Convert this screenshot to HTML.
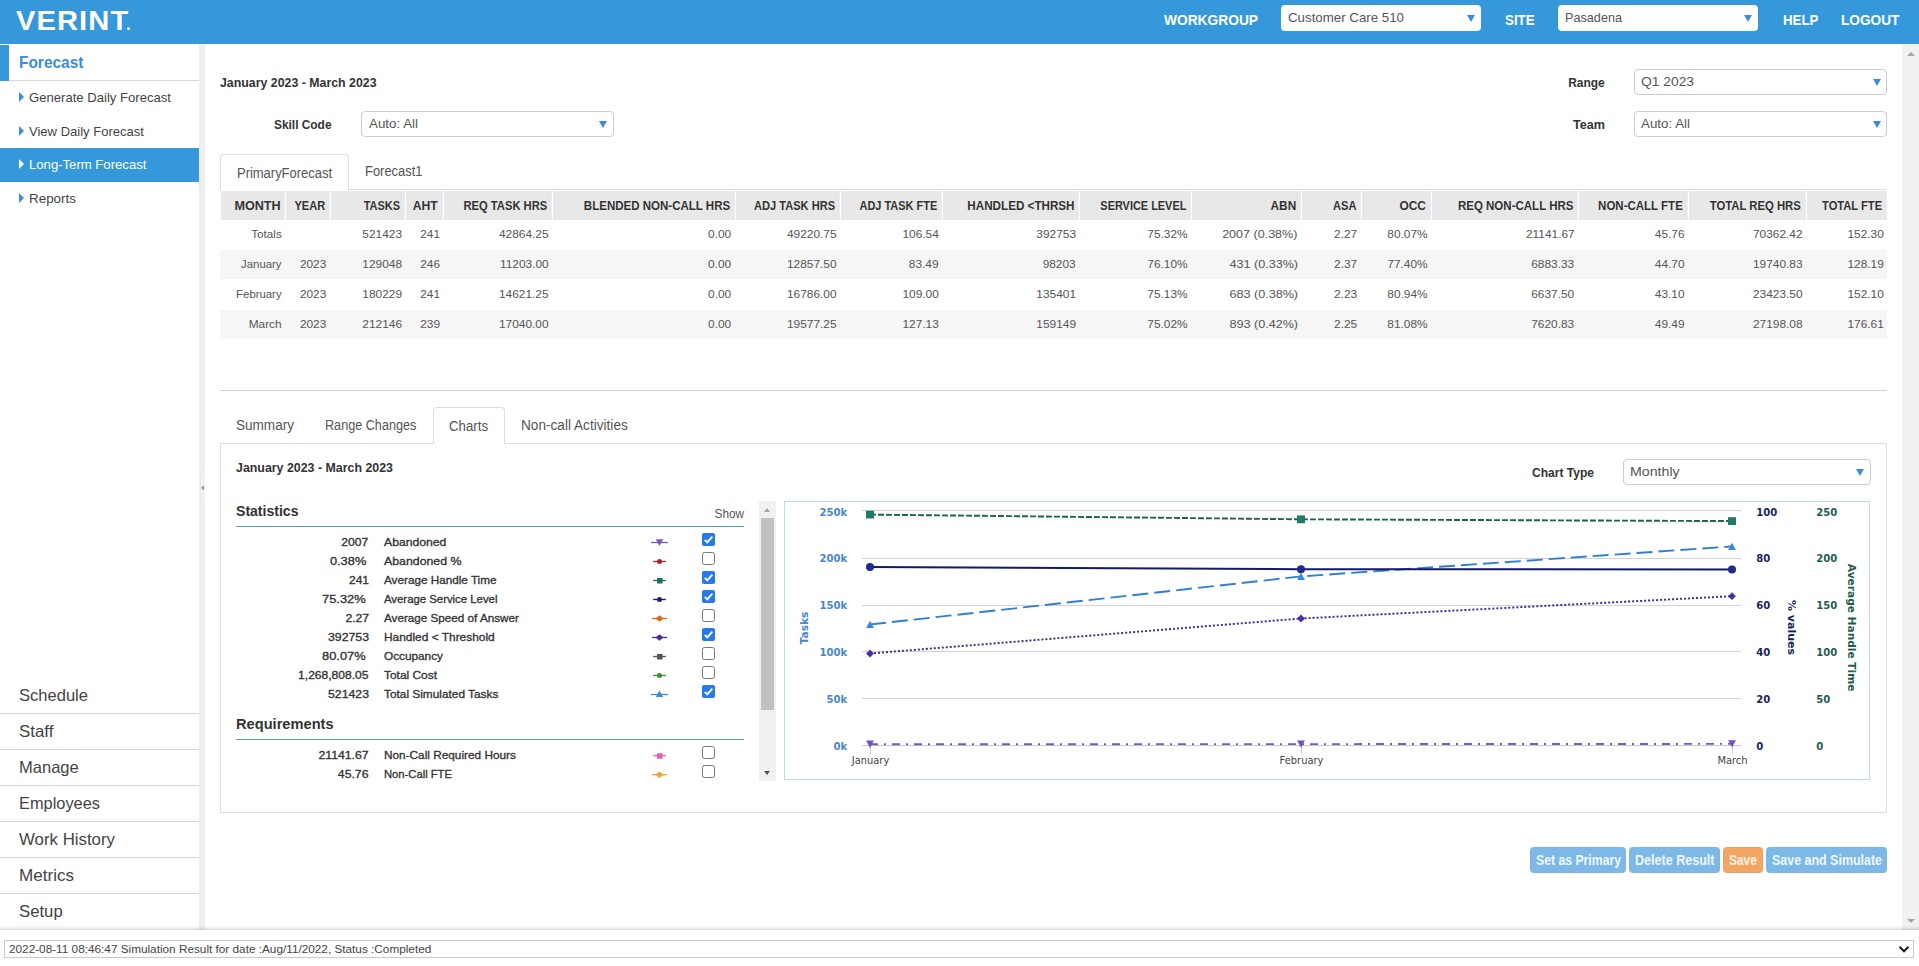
<!DOCTYPE html>
<html lang="en"><head><meta charset="utf-8"><title>Long-Term Forecast</title>
<style>
*{box-sizing:border-box}
html,body{margin:0;padding:0}
body{width:1919px;height:966px;position:relative;overflow:hidden;background:#fff;font-family:"Liberation Sans",sans-serif;color:#333}
.t{position:absolute;white-space:nowrap;line-height:1}
.b{font-weight:bold}
.abs{position:absolute}
#hdr{position:absolute;left:0;top:0;width:1919px;height:44px;background:#3598db}
#hdr .t{color:#fff}
.sel{position:absolute;background:#fff;border:1px solid #cbcbd3;border-radius:4px}
.sel.h{border:0;border-radius:4px}
.arr{position:absolute;width:0;height:0;border-left:4.7px solid transparent;border-right:4.7px solid transparent;border-top:7.6px solid #3b8fd9;margin:-0.5px 0 0 -0.2px}
#side{position:absolute;left:0;top:44px;width:199px;height:886px;background:#fff}
#split{position:absolute;left:199px;top:44px;width:6px;height:886px;background:#eeeef0}
#vsb{position:absolute;left:1902px;top:44px;width:17px;height:886px;background:#f1f1f1}
.tri{position:absolute;width:0;height:0}
#foot{position:absolute;left:0;top:930px;width:1919px;height:36px;background:#fff}
.hc{position:absolute;top:191px;height:29px;background:#e8e8e8;border-right:1px solid #e6eff6}
.row{position:absolute;left:220px;width:1667px;height:29px;background:#f6f6f6}
.ln{position:absolute;background:#ddd}
.sb{color:#333;-webkit-text-stroke:0.32px #333}
</style></head><body>
<div id="hdr">
<div class="t b" style="top:7.48px;font-size:27.2px;left:16.4px;letter-spacing:1px;transform:scaleX(1.0715);transform-origin:left center;">VERINT</div>
<div class="abs" style="left:126.5px;top:27px;width:3px;height:3px;border-radius:2px;background:#fff"></div>
<div class="t b" style="top:13.15px;font-size:14px;left:1164px;transform:scaleX(0.9826);transform-origin:left center;">WORKGROUP</div>
<div class="sel h" style="left:1281px;top:5px;width:200px;height:26px"></div>
<div class="t" style="top:10.97px;font-size:13.5px;left:1287.7px;transform:scaleX(0.9847);transform-origin:left center;color:#555">Customer Care 510</div>
<div class="arr" style="left:1467px;top:15.5px"></div>
<div class="t b" style="top:13.15px;font-size:14px;left:1505px;transform:scaleX(0.9512);transform-origin:left center;">SITE</div>
<div class="sel h" style="left:1558px;top:5px;width:200px;height:26px"></div>
<div class="t" style="top:10.97px;font-size:13.5px;left:1564.7px;transform:scaleX(0.9375);transform-origin:left center;color:#555">Pasadena</div>
<div class="arr" style="left:1744px;top:15.5px"></div>
<div class="t b" style="top:13.15px;font-size:14px;left:1782.5px;transform:scaleX(0.9481);transform-origin:left center;">HELP</div>
<div class="t b" style="top:13.15px;font-size:14px;left:1841px;transform:scaleX(0.9752);transform-origin:left center;">LOGOUT</div>
</div>
<div id="side"></div><div id="split"></div>
<div class="abs" style="left:0;top:45px;width:9px;height:36px;background:#3598db"></div>
<div class="abs" style="left:9px;top:80px;width:190px;height:1px;background:#d9d9d9"></div>
<div class="t b" style="top:54.11px;font-size:17px;left:18.5px;transform:scaleX(0.9088);transform-origin:left center;color:#3d8dd4">Forecast</div>
<div class="tri" style="left:19px;top:92.1px;border-top:5px solid transparent;border-bottom:5px solid transparent;border-left:5.5px solid #3b8fd9"></div>
<div class="t" style="top:90.77px;font-size:13.5px;left:28.5px;transform:scaleX(0.9705);transform-origin:left center;color:#444">Generate Daily Forecast</div>
<div class="tri" style="left:19px;top:126.1px;border-top:5px solid transparent;border-bottom:5px solid transparent;border-left:5.5px solid #3b8fd9"></div>
<div class="t" style="top:124.77px;font-size:13.5px;left:28.5px;transform:scaleX(0.9660);transform-origin:left center;color:#444">View Daily Forecast</div>
<div class="abs" style="left:0;top:148px;width:199px;height:34px;background:#3598db"></div>
<div class="tri" style="left:19px;top:159.1px;border-top:5px solid transparent;border-bottom:5px solid transparent;border-left:5.5px solid #fff"></div>
<div class="t" style="top:157.77px;font-size:13.5px;left:28.5px;transform:scaleX(0.9719);transform-origin:left center;color:#fff">Long-Term Forecast</div>
<div class="tri" style="left:19px;top:193.1px;border-top:5px solid transparent;border-bottom:5px solid transparent;border-left:5.5px solid #3b8fd9"></div>
<div class="t" style="top:191.77px;font-size:13.5px;left:28.5px;transform:scaleX(0.9943);transform-origin:left center;color:#444">Reports</div>
<div class="t" style="top:687.03px;font-size:16.5px;left:18.5px;transform:scaleX(1.0028);transform-origin:left center;color:#444">Schedule</div>
<div class="abs" style="left:0;top:713px;width:199px;height:1px;background:#d4d4d4"></div>
<div class="t" style="top:723.03px;font-size:16.5px;left:18.5px;transform:scaleX(1.0227);transform-origin:left center;color:#444">Staff</div>
<div class="abs" style="left:0;top:749px;width:199px;height:1px;background:#d4d4d4"></div>
<div class="t" style="top:759.03px;font-size:16.5px;left:18.5px;transform:scaleX(1.0012);transform-origin:left center;color:#444">Manage</div>
<div class="abs" style="left:0;top:785px;width:199px;height:1px;background:#d4d4d4"></div>
<div class="t" style="top:795.03px;font-size:16.5px;left:18.5px;transform:scaleX(0.9924);transform-origin:left center;color:#444">Employees</div>
<div class="abs" style="left:0;top:821px;width:199px;height:1px;background:#d4d4d4"></div>
<div class="t" style="top:831.03px;font-size:16.5px;left:18.5px;transform:scaleX(1.0200);transform-origin:left center;color:#444">Work History</div>
<div class="abs" style="left:0;top:857px;width:199px;height:1px;background:#d4d4d4"></div>
<div class="t" style="top:867.03px;font-size:16.5px;left:18.5px;transform:scaleX(1.0345);transform-origin:left center;color:#444">Metrics</div>
<div class="abs" style="left:0;top:893px;width:199px;height:1px;background:#d4d4d4"></div>
<div class="t" style="top:903.03px;font-size:16.5px;left:18.5px;transform:scaleX(1.0135);transform-origin:left center;color:#444">Setup</div>
<svg class="abs" style="left:199px;top:468px" width="6" height="40" viewBox="0 0 6 40"><path d="M5.3 2.5 L1.3 6.5 L1.3 32.5 L5.3 36.5" fill="#f1f1f2" stroke="#e3e3e5" stroke-width="0.8"/><path d="M5 17.2 L5 22.4 L1.9 19.8 Z" fill="#9a9a9a"/></svg>
<div id="vsb"></div>
<div class="tri" style="left:1907px;top:52px;border-left:4px solid transparent;border-right:4px solid transparent;border-bottom:4.5px solid #a3a3a3;margin-left:-0.5px"></div>
<div class="tri" style="left:1907px;top:919px;border-left:4px solid transparent;border-right:4px solid transparent;border-top:4.5px solid #a3a3a3;margin-left:-0.5px"></div>
<div class="t b" style="top:76.20px;font-size:13px;left:220px;transform:scaleX(0.9498);transform-origin:left center;">January 2023 - March 2023</div>
<div class="t b" style="top:76.00px;font-size:13px;right:314.5px;transform:scaleX(0.9212);transform-origin:right center;">Range</div>
<div class="sel" style="left:1634px;top:69px;width:253px;height:26px"></div>
<div class="t" style="top:74.77px;font-size:13.5px;left:1640.5px;transform:scaleX(1.0233);transform-origin:left center;color:#555">Q1 2023</div>
<div class="arr" style="left:1873px;top:79.3px"></div>
<div class="t b" style="top:118.00px;font-size:13px;left:274px;transform:scaleX(0.9149);transform-origin:left center;">Skill Code</div>
<div class="sel" style="left:361px;top:111px;width:253px;height:26px"></div>
<div class="t" style="top:116.77px;font-size:13.5px;left:368.5px;transform:scaleX(0.9893);transform-origin:left center;color:#555">Auto: All</div>
<div class="arr" style="left:599.5px;top:121px"></div>
<div class="t b" style="top:118.00px;font-size:13px;right:314.5px;transform:scaleX(0.9698);transform-origin:right center;">Team</div>
<div class="sel" style="left:1634px;top:111px;width:253px;height:26px"></div>
<div class="t" style="top:116.77px;font-size:13.5px;left:1641px;transform:scaleX(0.9893);transform-origin:left center;color:#555">Auto: All</div>
<div class="arr" style="left:1873px;top:121px"></div>
<div class="ln" style="left:220px;top:189px;width:1667px;height:1px"></div>
<div class="abs" style="left:220px;top:153.5px;width:129px;height:36.5px;border:1px solid #ddd;border-bottom:0;border-radius:4px 4px 0 0;background:#fff"></div>
<div class="t" style="top:165.65px;font-size:14px;left:237px;transform:scaleX(0.9252);transform-origin:left center;color:#555">PrimaryForecast</div>
<div class="t" style="top:164.45px;font-size:14px;left:364.5px;transform:scaleX(0.9237);transform-origin:left center;color:#555">Forecast1</div>
<div class="hc" style="left:221px;width:63.5px"></div>
<div class="t b" style="top:199.20px;font-size:13px;right:1638.8px;transform:scaleX(0.9694);transform-origin:right center;">MONTH</div>
<div class="hc" style="left:286px;width:43.5px"></div>
<div class="t b" style="top:199.20px;font-size:13px;right:1593.8px;transform:scaleX(0.8500);transform-origin:right center;">YEAR</div>
<div class="hc" style="left:331px;width:73.5px"></div>
<div class="t b" style="top:199.20px;font-size:13px;right:1518.8px;transform:scaleX(0.8447);transform-origin:right center;">TASKS</div>
<div class="hc" style="left:406px;width:36.5px"></div>
<div class="t b" style="top:199.20px;font-size:13px;right:1480.8px;transform:scaleX(0.9357);transform-origin:right center;">AHT</div>
<div class="hc" style="left:444px;width:107.5px"></div>
<div class="t b" style="top:199.20px;font-size:13px;right:1371.8px;transform:scaleX(0.8616);transform-origin:right center;">REQ TASK HRS</div>
<div class="hc" style="left:553px;width:181.5px"></div>
<div class="t b" style="top:199.20px;font-size:13px;right:1188.8px;transform:scaleX(0.8859);transform-origin:right center;">BLENDED NON-CALL HRS</div>
<div class="hc" style="left:736px;width:103.5px"></div>
<div class="t b" style="top:199.20px;font-size:13px;right:1083.8px;transform:scaleX(0.8528);transform-origin:right center;">ADJ TASK HRS</div>
<div class="hc" style="left:841px;width:100.5px"></div>
<div class="t b" style="top:199.20px;font-size:13px;right:981.8px;transform:scaleX(0.8427);transform-origin:right center;">ADJ TASK FTE</div>
<div class="hc" style="left:943px;width:135.5px"></div>
<div class="t b" style="top:199.20px;font-size:13px;right:844.8px;transform:scaleX(0.8968);transform-origin:right center;">HANDLED &lt;THRSH</div>
<div class="hc" style="left:1080px;width:110.5px"></div>
<div class="t b" style="top:199.20px;font-size:13px;right:732.8px;transform:scaleX(0.8403);transform-origin:right center;">SERVICE LEVEL</div>
<div class="hc" style="left:1192px;width:108.5px"></div>
<div class="t b" style="top:199.20px;font-size:13px;right:622.8px;transform:scaleX(0.9089);transform-origin:right center;">ABN</div>
<div class="hc" style="left:1302px;width:58.5px"></div>
<div class="t b" style="top:199.20px;font-size:13px;right:562.8px;transform:scaleX(0.8525);transform-origin:right center;">ASA</div>
<div class="hc" style="left:1362px;width:68.5px"></div>
<div class="t b" style="top:199.20px;font-size:13px;right:492.8px;transform:scaleX(0.9173);transform-origin:right center;">OCC</div>
<div class="hc" style="left:1432px;width:145.5px"></div>
<div class="t b" style="top:199.20px;font-size:13px;right:345.8px;transform:scaleX(0.8859);transform-origin:right center;">REQ NON-CALL HRS</div>
<div class="hc" style="left:1579px;width:108.5px"></div>
<div class="t b" style="top:199.20px;font-size:13px;right:235.8px;transform:scaleX(0.8841);transform-origin:right center;">NON-CALL FTE</div>
<div class="hc" style="left:1689px;width:116.5px"></div>
<div class="t b" style="top:199.20px;font-size:13px;right:117.8px;transform:scaleX(0.8689);transform-origin:right center;">TOTAL REQ HRS</div>
<div class="hc" style="left:1807px;width:79.5px"></div>
<div class="t b" style="top:199.20px;font-size:13px;right:36.8px;transform:scaleX(0.8565);transform-origin:right center;">TOTAL FTE</div>
<div class="t" style="top:229.35px;font-size:11.4px;right:1637.4px;transform:scaleX(1.0242);transform-origin:right center;color:#555">Totals</div>
<div class="t" style="top:229.35px;font-size:11.4px;right:1517.4px;transform:scaleX(1.0430);transform-origin:right center;color:#555">521423</div>
<div class="t" style="top:229.35px;font-size:11.4px;right:1479.4px;transform:scaleX(1.0430);transform-origin:right center;color:#555">241</div>
<div class="t" style="top:229.35px;font-size:11.4px;right:1370.4px;transform:scaleX(1.0430);transform-origin:right center;color:#555">42864.25</div>
<div class="t" style="top:229.35px;font-size:11.4px;right:1187.4px;transform:scaleX(1.0430);transform-origin:right center;color:#555">0.00</div>
<div class="t" style="top:229.35px;font-size:11.4px;right:1082.4px;transform:scaleX(1.0430);transform-origin:right center;color:#555">49220.75</div>
<div class="t" style="top:229.35px;font-size:11.4px;right:980.4px;transform:scaleX(1.0430);transform-origin:right center;color:#555">106.54</div>
<div class="t" style="top:229.35px;font-size:11.4px;right:843.4px;transform:scaleX(1.0430);transform-origin:right center;color:#555">392753</div>
<div class="t" style="top:229.35px;font-size:11.4px;right:731.4px;transform:scaleX(1.0430);transform-origin:right center;color:#555">75.32%</div>
<div class="t" style="top:229.35px;font-size:11.4px;right:621.4px;transform:scaleX(1.1002);transform-origin:right center;color:#555">2007 (0.38%)</div>
<div class="t" style="top:229.35px;font-size:11.4px;right:561.4px;transform:scaleX(1.0430);transform-origin:right center;color:#555">2.27</div>
<div class="t" style="top:229.35px;font-size:11.4px;right:491.4px;transform:scaleX(1.0430);transform-origin:right center;color:#555">80.07%</div>
<div class="t" style="top:229.35px;font-size:11.4px;right:344.4px;transform:scaleX(1.0430);transform-origin:right center;color:#555">21141.67</div>
<div class="t" style="top:229.35px;font-size:11.4px;right:234.4px;transform:scaleX(1.0430);transform-origin:right center;color:#555">45.76</div>
<div class="t" style="top:229.35px;font-size:11.4px;right:116.4px;transform:scaleX(1.0430);transform-origin:right center;color:#555">70362.42</div>
<div class="t" style="top:229.35px;font-size:11.4px;right:35.4px;transform:scaleX(1.0430);transform-origin:right center;color:#555">152.30</div>
<div class="row" style="top:250px"></div>
<div class="t" style="top:259.35px;font-size:11.4px;right:1637.4px;transform:scaleX(0.9986);transform-origin:right center;color:#555">January</div>
<div class="t" style="top:259.35px;font-size:11.4px;right:1592.4px;transform:scaleX(1.0430);transform-origin:right center;color:#555">2023</div>
<div class="t" style="top:259.35px;font-size:11.4px;right:1517.4px;transform:scaleX(1.0430);transform-origin:right center;color:#555">129048</div>
<div class="t" style="top:259.35px;font-size:11.4px;right:1479.4px;transform:scaleX(1.0430);transform-origin:right center;color:#555">246</div>
<div class="t" style="top:259.35px;font-size:11.4px;right:1370.4px;transform:scaleX(1.0430);transform-origin:right center;color:#555">11203.00</div>
<div class="t" style="top:259.35px;font-size:11.4px;right:1187.4px;transform:scaleX(1.0430);transform-origin:right center;color:#555">0.00</div>
<div class="t" style="top:259.35px;font-size:11.4px;right:1082.4px;transform:scaleX(1.0430);transform-origin:right center;color:#555">12857.50</div>
<div class="t" style="top:259.35px;font-size:11.4px;right:980.4px;transform:scaleX(1.0430);transform-origin:right center;color:#555">83.49</div>
<div class="t" style="top:259.35px;font-size:11.4px;right:843.4px;transform:scaleX(1.0430);transform-origin:right center;color:#555">98203</div>
<div class="t" style="top:259.35px;font-size:11.4px;right:731.4px;transform:scaleX(1.0430);transform-origin:right center;color:#555">76.10%</div>
<div class="t" style="top:259.35px;font-size:11.4px;right:621.4px;transform:scaleX(1.1062);transform-origin:right center;color:#555">431 (0.33%)</div>
<div class="t" style="top:259.35px;font-size:11.4px;right:561.4px;transform:scaleX(1.0430);transform-origin:right center;color:#555">2.37</div>
<div class="t" style="top:259.35px;font-size:11.4px;right:491.4px;transform:scaleX(1.0430);transform-origin:right center;color:#555">77.40%</div>
<div class="t" style="top:259.35px;font-size:11.4px;right:344.4px;transform:scaleX(1.0430);transform-origin:right center;color:#555">6883.33</div>
<div class="t" style="top:259.35px;font-size:11.4px;right:234.4px;transform:scaleX(1.0430);transform-origin:right center;color:#555">44.70</div>
<div class="t" style="top:259.35px;font-size:11.4px;right:116.4px;transform:scaleX(1.0430);transform-origin:right center;color:#555">19740.83</div>
<div class="t" style="top:259.35px;font-size:11.4px;right:35.4px;transform:scaleX(1.0430);transform-origin:right center;color:#555">128.19</div>
<div class="t" style="top:289.35px;font-size:11.4px;right:1637.4px;transform:scaleX(0.9974);transform-origin:right center;color:#555">February</div>
<div class="t" style="top:289.35px;font-size:11.4px;right:1592.4px;transform:scaleX(1.0430);transform-origin:right center;color:#555">2023</div>
<div class="t" style="top:289.35px;font-size:11.4px;right:1517.4px;transform:scaleX(1.0430);transform-origin:right center;color:#555">180229</div>
<div class="t" style="top:289.35px;font-size:11.4px;right:1479.4px;transform:scaleX(1.0430);transform-origin:right center;color:#555">241</div>
<div class="t" style="top:289.35px;font-size:11.4px;right:1370.4px;transform:scaleX(1.0430);transform-origin:right center;color:#555">14621.25</div>
<div class="t" style="top:289.35px;font-size:11.4px;right:1187.4px;transform:scaleX(1.0430);transform-origin:right center;color:#555">0.00</div>
<div class="t" style="top:289.35px;font-size:11.4px;right:1082.4px;transform:scaleX(1.0430);transform-origin:right center;color:#555">16786.00</div>
<div class="t" style="top:289.35px;font-size:11.4px;right:980.4px;transform:scaleX(1.0430);transform-origin:right center;color:#555">109.00</div>
<div class="t" style="top:289.35px;font-size:11.4px;right:843.4px;transform:scaleX(1.0430);transform-origin:right center;color:#555">135401</div>
<div class="t" style="top:289.35px;font-size:11.4px;right:731.4px;transform:scaleX(1.0430);transform-origin:right center;color:#555">75.13%</div>
<div class="t" style="top:289.35px;font-size:11.4px;right:621.4px;transform:scaleX(1.1062);transform-origin:right center;color:#555">683 (0.38%)</div>
<div class="t" style="top:289.35px;font-size:11.4px;right:561.4px;transform:scaleX(1.0430);transform-origin:right center;color:#555">2.23</div>
<div class="t" style="top:289.35px;font-size:11.4px;right:491.4px;transform:scaleX(1.0430);transform-origin:right center;color:#555">80.94%</div>
<div class="t" style="top:289.35px;font-size:11.4px;right:344.4px;transform:scaleX(1.0430);transform-origin:right center;color:#555">6637.50</div>
<div class="t" style="top:289.35px;font-size:11.4px;right:234.4px;transform:scaleX(1.0430);transform-origin:right center;color:#555">43.10</div>
<div class="t" style="top:289.35px;font-size:11.4px;right:116.4px;transform:scaleX(1.0430);transform-origin:right center;color:#555">23423.50</div>
<div class="t" style="top:289.35px;font-size:11.4px;right:35.4px;transform:scaleX(1.0430);transform-origin:right center;color:#555">152.10</div>
<div class="row" style="top:310px"></div>
<div class="t" style="top:319.35px;font-size:11.4px;right:1637.4px;transform:scaleX(1.0419);transform-origin:right center;color:#555">March</div>
<div class="t" style="top:319.35px;font-size:11.4px;right:1592.4px;transform:scaleX(1.0430);transform-origin:right center;color:#555">2023</div>
<div class="t" style="top:319.35px;font-size:11.4px;right:1517.4px;transform:scaleX(1.0430);transform-origin:right center;color:#555">212146</div>
<div class="t" style="top:319.35px;font-size:11.4px;right:1479.4px;transform:scaleX(1.0430);transform-origin:right center;color:#555">239</div>
<div class="t" style="top:319.35px;font-size:11.4px;right:1370.4px;transform:scaleX(1.0430);transform-origin:right center;color:#555">17040.00</div>
<div class="t" style="top:319.35px;font-size:11.4px;right:1187.4px;transform:scaleX(1.0430);transform-origin:right center;color:#555">0.00</div>
<div class="t" style="top:319.35px;font-size:11.4px;right:1082.4px;transform:scaleX(1.0430);transform-origin:right center;color:#555">19577.25</div>
<div class="t" style="top:319.35px;font-size:11.4px;right:980.4px;transform:scaleX(1.0430);transform-origin:right center;color:#555">127.13</div>
<div class="t" style="top:319.35px;font-size:11.4px;right:843.4px;transform:scaleX(1.0430);transform-origin:right center;color:#555">159149</div>
<div class="t" style="top:319.35px;font-size:11.4px;right:731.4px;transform:scaleX(1.0430);transform-origin:right center;color:#555">75.02%</div>
<div class="t" style="top:319.35px;font-size:11.4px;right:621.4px;transform:scaleX(1.1062);transform-origin:right center;color:#555">893 (0.42%)</div>
<div class="t" style="top:319.35px;font-size:11.4px;right:561.4px;transform:scaleX(1.0430);transform-origin:right center;color:#555">2.25</div>
<div class="t" style="top:319.35px;font-size:11.4px;right:491.4px;transform:scaleX(1.0430);transform-origin:right center;color:#555">81.08%</div>
<div class="t" style="top:319.35px;font-size:11.4px;right:344.4px;transform:scaleX(1.0430);transform-origin:right center;color:#555">7620.83</div>
<div class="t" style="top:319.35px;font-size:11.4px;right:234.4px;transform:scaleX(1.0430);transform-origin:right center;color:#555">49.49</div>
<div class="t" style="top:319.35px;font-size:11.4px;right:116.4px;transform:scaleX(1.0430);transform-origin:right center;color:#555">27198.08</div>
<div class="t" style="top:319.35px;font-size:11.4px;right:35.4px;transform:scaleX(1.0430);transform-origin:right center;color:#555">176.61</div>
<div class="ln" style="left:220px;top:390px;width:1667px;height:1px;background:#d0d0d0"></div>
<div class="abs" style="left:220px;top:443px;width:1667px;height:370px;border:1px solid #ddd;background:#fff"></div>
<div class="abs" style="left:433px;top:407px;width:72px;height:37px;border:1px solid #ddd;border-bottom:0;border-radius:4px 4px 0 0;background:#fff"></div>
<div class="t" style="top:418.15px;font-size:14px;left:235.5px;transform:scaleX(0.9683);transform-origin:left center;color:#555">Summary</div>
<div class="t" style="top:418.15px;font-size:14px;left:325.3px;transform:scaleX(0.9023);transform-origin:left center;color:#555">Range Changes</div>
<div class="t" style="top:419.35px;font-size:14px;left:449px;transform:scaleX(0.9458);transform-origin:left center;color:#555">Charts</div>
<div class="t" style="top:418.15px;font-size:14px;left:520.5px;transform:scaleX(0.9735);transform-origin:left center;color:#555">Non-call Activities</div>
<div class="t b" style="top:460.80px;font-size:13px;left:235.5px;transform:scaleX(0.9529);transform-origin:left center;">January 2023 - March 2023</div>
<div class="t b" style="top:466.00px;font-size:13px;left:1532px;transform:scaleX(0.9263);transform-origin:left center;">Chart Type</div>
<div class="sel" style="left:1623px;top:459px;width:248px;height:26px"></div>
<div class="t" style="top:465.27px;font-size:13.5px;left:1630px;transform:scaleX(1.0514);transform-origin:left center;color:#555">Monthly</div>
<div class="arr" style="left:1856.5px;top:469.3px"></div>
<div class="t b" style="top:503.30px;font-size:15px;left:235.5px;transform:scaleX(0.9371);transform-origin:left center;">Statistics</div>
<div class="t" style="top:507.84px;font-size:12px;right:1174.7px;transform:scaleX(0.9827);transform-origin:right center;color:#555">Show</div>
<div class="abs" style="left:236px;top:526px;width:508px;height:1px;background:#5a9bc9"></div>
<div class="t b" style="top:716.30px;font-size:15px;left:235.5px;transform:scaleX(0.9757);transform-origin:left center;">Requirements</div>
<div class="abs" style="left:236px;top:739px;width:508px;height:1px;background:#5a9bc9"></div>
<div class="t sb" style="top:537.25px;font-size:11.4px;right:1550.2px;transform:scaleX(1.0646);transform-origin:right center;">2007</div>
<div class="t sb" style="top:537.25px;font-size:11.4px;left:383.6px;transform:scaleX(1.0699);transform-origin:left center;">Abandoned</div>
<svg class="abs" style="left:702px;top:532.7px" width="13" height="13" viewBox="0 0 13 13"><rect x="0" y="0" width="13" height="13" rx="2" fill="#2878ee"/><path d="M2.8 6.8 L5.3 9.3 L10.3 3.6" fill="none" stroke="#fff" stroke-width="1.9"/></svg>
<div class="t sb" style="top:556.25px;font-size:11.4px;right:1553.2px;transform:scaleX(1.1261);transform-origin:right center;">0.38%</div>
<div class="t sb" style="top:556.25px;font-size:11.4px;left:383.6px;transform:scaleX(1.0820);transform-origin:left center;">Abandoned %</div>
<div class="abs" style="left:702px;top:551.7px;width:13px;height:13px;border:1px solid #767676;border-radius:2.5px;background:#fff"></div>
<div class="t sb" style="top:575.25px;font-size:11.4px;right:1550.2px;transform:scaleX(1.0515);transform-origin:right center;">241</div>
<div class="t sb" style="top:575.25px;font-size:11.4px;left:383.6px;transform:scaleX(1.0291);transform-origin:left center;">Average Handle Time</div>
<svg class="abs" style="left:702px;top:570.7px" width="13" height="13" viewBox="0 0 13 13"><rect x="0" y="0" width="13" height="13" rx="2" fill="#2878ee"/><path d="M2.8 6.8 L5.3 9.3 L10.3 3.6" fill="none" stroke="#fff" stroke-width="1.9"/></svg>
<div class="t sb" style="top:594.25px;font-size:11.4px;right:1553.2px;transform:scaleX(1.1277);transform-origin:right center;">75.32%</div>
<div class="t sb" style="top:594.25px;font-size:11.4px;left:383.6px;transform:scaleX(0.9969);transform-origin:left center;">Average Service Level</div>
<svg class="abs" style="left:702px;top:589.7px" width="13" height="13" viewBox="0 0 13 13"><rect x="0" y="0" width="13" height="13" rx="2" fill="#2878ee"/><path d="M2.8 6.8 L5.3 9.3 L10.3 3.6" fill="none" stroke="#fff" stroke-width="1.9"/></svg>
<div class="t sb" style="top:613.25px;font-size:11.4px;right:1550.2px;transform:scaleX(1.0727);transform-origin:right center;">2.27</div>
<div class="t sb" style="top:613.25px;font-size:11.4px;left:383.6px;transform:scaleX(1.0257);transform-origin:left center;">Average Speed of Answer</div>
<div class="abs" style="left:702px;top:608.7px;width:13px;height:13px;border:1px solid #767676;border-radius:2.5px;background:#fff"></div>
<div class="t sb" style="top:632.25px;font-size:11.4px;right:1550.2px;transform:scaleX(1.0778);transform-origin:right center;">392753</div>
<div class="t sb" style="top:632.25px;font-size:11.4px;left:383.6px;transform:scaleX(1.0458);transform-origin:left center;">Handled &lt; Threshold</div>
<svg class="abs" style="left:702px;top:627.7px" width="13" height="13" viewBox="0 0 13 13"><rect x="0" y="0" width="13" height="13" rx="2" fill="#2878ee"/><path d="M2.8 6.8 L5.3 9.3 L10.3 3.6" fill="none" stroke="#fff" stroke-width="1.9"/></svg>
<div class="t sb" style="top:651.25px;font-size:11.4px;right:1553.2px;transform:scaleX(1.1277);transform-origin:right center;">80.07%</div>
<div class="t sb" style="top:651.25px;font-size:11.4px;left:383.6px;transform:scaleX(1.0346);transform-origin:left center;">Occupancy</div>
<div class="abs" style="left:702px;top:646.7px;width:13px;height:13px;border:1px solid #767676;border-radius:2.5px;background:#fff"></div>
<div class="t sb" style="top:670.25px;font-size:11.4px;right:1550.2px;transform:scaleX(1.0591);transform-origin:right center;">1,268,808.05</div>
<div class="t sb" style="top:670.25px;font-size:11.4px;left:383.6px;transform:scaleX(1.0456);transform-origin:left center;">Total Cost</div>
<div class="abs" style="left:702px;top:665.7px;width:13px;height:13px;border:1px solid #767676;border-radius:2.5px;background:#fff"></div>
<div class="t sb" style="top:689.25px;font-size:11.4px;right:1550.2px;transform:scaleX(1.0778);transform-origin:right center;">521423</div>
<div class="t sb" style="top:689.25px;font-size:11.4px;left:383.6px;transform:scaleX(1.0405);transform-origin:left center;">Total Simulated Tasks</div>
<svg class="abs" style="left:702px;top:684.7px" width="13" height="13" viewBox="0 0 13 13"><rect x="0" y="0" width="13" height="13" rx="2" fill="#2878ee"/><path d="M2.8 6.8 L5.3 9.3 L10.3 3.6" fill="none" stroke="#fff" stroke-width="1.9"/></svg>
<div class="t sb" style="top:750.45px;font-size:11.4px;right:1550.2px;transform:scaleX(1.0770);transform-origin:right center;">21141.67</div>
<div class="t sb" style="top:750.45px;font-size:11.4px;left:383.6px;transform:scaleX(1.0365);transform-origin:left center;">Non-Call Required Hours</div>
<div class="abs" style="left:702px;top:745.9000000000001px;width:13px;height:13px;border:1px solid #767676;border-radius:2.5px;background:#fff"></div>
<div class="t sb" style="top:769.45px;font-size:11.4px;right:1550.2px;transform:scaleX(1.0761);transform-origin:right center;">45.76</div>
<div class="t sb" style="top:769.45px;font-size:11.4px;left:383.6px;transform:scaleX(0.9848);transform-origin:left center;">Non-Call FTE</div>
<div class="abs" style="left:702px;top:764.9000000000001px;width:13px;height:13px;border:1px solid #767676;border-radius:2.5px;background:#fff"></div>
<svg class="abs" style="left:0;top:0" width="1919" height="966" viewBox="0 0 1919 966"><line x1="651.0" y1="542.5" x2="668.0" y2="542.5" stroke="#7b57c2" stroke-width="1.3"/><path d="M655.8 539.2 L663.2 539.2 L659.5 546.0 Z" fill="#7b57c2"/><line x1="653.1" y1="561.5" x2="665.9" y2="561.5" stroke="#a8232b" stroke-width="1.3"/><circle cx="659.5" cy="561.5" r="2.5" fill="#a8232b"/><line x1="653.1" y1="580.5" x2="665.9" y2="580.5" stroke="#1f6e5e" stroke-width="1.3"/><rect x="657.0" y="578.0" width="5.5" height="5.5" fill="#1f6e5e"/><line x1="653.1" y1="599.5" x2="665.9" y2="599.5" stroke="#1b1f70" stroke-width="1.3"/><circle cx="659.5" cy="599.5" r="2.5" fill="#1b1f70"/><line x1="651.9" y1="618.5" x2="667.1" y2="618.5" stroke="#e2641c" stroke-width="1.3"/><path d="M655.5 618.5 L659.5 615.2 L663.5 618.5 L659.5 621.8 Z" fill="#e2641c"/><line x1="651.9" y1="637.5" x2="667.1" y2="637.5" stroke="#4b2a9a" stroke-width="1.3"/><path d="M655.5 637.5 L659.5 634.2 L663.5 637.5 L659.5 640.8 Z" fill="#4b2a9a"/><line x1="653.1" y1="656.5" x2="665.9" y2="656.5" stroke="#555555" stroke-width="1.3"/><rect x="657.0" y="654.0" width="5.5" height="5.5" fill="#555555"/><line x1="653.1" y1="675.5" x2="665.9" y2="675.5" stroke="#3d8f3a" stroke-width="1.3"/><circle cx="659.5" cy="675.5" r="2.5" fill="#3d8f3a"/><line x1="651.0" y1="694.5" x2="668.0" y2="694.5" stroke="#3d8bdb" stroke-width="1.3"/><path d="M655.8 697.1 L663.2 697.1 L659.5 690.5 Z" fill="#3d8bdb"/><line x1="653.1" y1="755.7" x2="665.9" y2="755.7" stroke="#e25fb3" stroke-width="1.3"/><rect x="657.0" y="753.2" width="5.5" height="5.5" fill="#e25fb3"/><line x1="651.9" y1="774.7" x2="667.1" y2="774.7" stroke="#f2a12c" stroke-width="1.3"/><path d="M655.5 774.7 L659.5 771.4000000000001 L663.5 774.7 L659.5 778.0 Z" fill="#f2a12c"/></svg>
<div class="abs" style="left:759px;top:501px;width:17px;height:280px;background:#f1f1f1"></div>
<div class="abs" style="left:761px;top:518px;width:13px;height:192px;background:#c1c1c1"></div>
<div class="tri" style="left:764px;top:507.5px;border-left:3.5px solid transparent;border-right:3.5px solid transparent;border-bottom:4px solid #a3a3a3"></div>
<div class="tri" style="left:764px;top:770.5px;border-left:3.5px solid transparent;border-right:3.5px solid transparent;border-top:4px solid #505050"></div>
<div class="abs" style="left:784px;top:501px;width:1086px;height:279px;border:1px solid #b9dcee;background:#fff"></div>
<svg class="abs" style="left:0;top:0;font-family:'DejaVu Sans','Liberation Sans',sans-serif" width="1919" height="966" viewBox="0 0 1919 966"><line x1="862" y1="745.5" x2="1741" y2="745.5" stroke="#c5cad6" stroke-width="1"/><line x1="862" y1="698.5" x2="1741" y2="698.5" stroke="#d2d2d2" stroke-width="1"/><line x1="862" y1="651.5" x2="1741" y2="651.5" stroke="#d2d2d2" stroke-width="1"/><line x1="862" y1="605.5" x2="1741" y2="605.5" stroke="#d2d2d2" stroke-width="1"/><line x1="862" y1="558.5" x2="1741" y2="558.5" stroke="#d2d2d2" stroke-width="1"/><line x1="862" y1="510.5" x2="1741" y2="510.5" stroke="#d2d2d2" stroke-width="1"/><line x1="870.5" y1="745" x2="870.5" y2="754.5" stroke="#c5cad6" stroke-width="1"/><line x1="1301.5" y1="745" x2="1301.5" y2="754.5" stroke="#c5cad6" stroke-width="1"/><line x1="1732.5" y1="745" x2="1732.5" y2="754.5" stroke="#c5cad6" stroke-width="1"/><polyline points="870,744.3 1301,744.1 1732,743.9" fill="none" stroke="#7b57c2" stroke-width="1.9" stroke-dasharray="8,6,2,6"/><path d="M866.1 740.6 L873.9 740.6 L870 747.9 Z" fill="#7450c4"/><path d="M1297.1 740.4 L1304.9 740.4 L1301 747.7 Z" fill="#7450c4"/><path d="M1728.1 740.2 L1735.9 740.2 L1732 747.5 Z" fill="#7450c4"/><polyline points="870,653.5 1301,618.5 1732,596.2" fill="none" stroke="#3b2a8c" stroke-width="1.9" stroke-dasharray="2,2"/><path d="M866.1 653.5 L870 649.6 L873.9 653.5 L870 657.4 Z" fill="#4a2fa8"/><path d="M1297.1 618.5 L1301 614.6 L1304.9 618.5 L1301 622.4 Z" fill="#4a2fa8"/><path d="M1728.1 596.2 L1732 592.3 L1735.9 596.2 L1732 600.1 Z" fill="#4a2fa8"/><polyline points="870,624.5 1301,576.4 1732,546.4" fill="none" stroke="#2f7fd6" stroke-width="1.9" stroke-dasharray="16,6"/><path d="M866.1 628.1 L873.9 628.1 L870 620.8 Z" fill="#3a86e0"/><path d="M1297.1 580.0 L1304.9 580.0 L1301 572.7 Z" fill="#3a86e0"/><path d="M1728.1 550.0 L1735.9 550.0 L1732 542.7 Z" fill="#3a86e0"/><polyline points="870,567.0 1301,569.2 1732,569.5" fill="none" stroke="#15196b" stroke-width="2"/><circle cx="870" cy="567.0" r="4" fill="#1f2a8a"/><circle cx="1301" cy="569.2" r="4" fill="#1f2a8a"/><circle cx="1732" cy="569.5" r="4" fill="#1f2a8a"/><polyline points="870,514.6 1301,519.3 1732,521.1" fill="none" stroke="#1b6353" stroke-width="1.9" stroke-dasharray="6,2"/><rect x="866" y="510.7" width="8" height="7.8" fill="#217a67"/><rect x="1297" y="515.4" width="8" height="7.8" fill="#217a67"/><rect x="1728" y="517.2" width="8" height="7.8" fill="#217a67"/><text transform="translate(847.3,749.7) scale(0.915,1)" fill="#4a86cf" font-size="11" font-weight="bold" text-anchor="end">0k</text><text transform="translate(847.3,702.7) scale(0.915,1)" fill="#4a86cf" font-size="11" font-weight="bold" text-anchor="end">50k</text><text transform="translate(847.3,655.7) scale(0.915,1)" fill="#4a86cf" font-size="11" font-weight="bold" text-anchor="end">100k</text><text transform="translate(847.3,608.7) scale(0.915,1)" fill="#4a86cf" font-size="11" font-weight="bold" text-anchor="end">150k</text><text transform="translate(847.3,561.7) scale(0.915,1)" fill="#4a86cf" font-size="11" font-weight="bold" text-anchor="end">200k</text><text transform="translate(847.3,516.1) scale(0.915,1)" fill="#4a86cf" font-size="11" font-weight="bold" text-anchor="end">250k</text><text transform="translate(1756.3,749.7) scale(0.915,1)" fill="#1b1f60" font-size="11" font-weight="bold" text-anchor="start">0</text><text transform="translate(1756.3,702.7) scale(0.915,1)" fill="#1b1f60" font-size="11" font-weight="bold" text-anchor="start">20</text><text transform="translate(1756.3,655.7) scale(0.915,1)" fill="#1b1f60" font-size="11" font-weight="bold" text-anchor="start">40</text><text transform="translate(1756.3,608.7) scale(0.915,1)" fill="#1b1f60" font-size="11" font-weight="bold" text-anchor="start">60</text><text transform="translate(1756.3,561.7) scale(0.915,1)" fill="#1b1f60" font-size="11" font-weight="bold" text-anchor="start">80</text><text transform="translate(1756.3,516.1) scale(0.915,1)" fill="#1b1f60" font-size="11" font-weight="bold" text-anchor="start">100</text><text transform="translate(1816.3,749.7) scale(0.915,1)" fill="#1f5c50" font-size="11" font-weight="bold" text-anchor="start">0</text><text transform="translate(1816.3,702.7) scale(0.915,1)" fill="#1f5c50" font-size="11" font-weight="bold" text-anchor="start">50</text><text transform="translate(1816.3,655.7) scale(0.915,1)" fill="#1f5c50" font-size="11" font-weight="bold" text-anchor="start">100</text><text transform="translate(1816.3,608.7) scale(0.915,1)" fill="#1f5c50" font-size="11" font-weight="bold" text-anchor="start">150</text><text transform="translate(1816.3,561.7) scale(0.915,1)" fill="#1f5c50" font-size="11" font-weight="bold" text-anchor="start">200</text><text transform="translate(1816.3,516.1) scale(0.915,1)" fill="#1f5c50" font-size="11" font-weight="bold" text-anchor="start">250</text><text transform="translate(870.5,764.0) scale(0.9,1)" fill="#444" font-size="11" font-weight="normal" text-anchor="middle">January</text><text transform="translate(1301.5,764.0) scale(0.9,1)" fill="#444" font-size="11" font-weight="normal" text-anchor="middle">February</text><text transform="translate(1732.5,764.0) scale(0.9,1)" fill="#444" font-size="11" font-weight="normal" text-anchor="middle">March</text><text transform="translate(807.5,628) rotate(-90) scale(0.97,1)" fill="#4a86cf" font-size="11" font-weight="bold" text-anchor="middle">Tasks</text><text transform="translate(1787.7,627.5) rotate(90) scale(1,1)" fill="#1b1f60" font-size="11" font-weight="bold" text-anchor="middle">% values</text><text transform="translate(1848,627.6) rotate(90) scale(0.965,1)" fill="#1f5c50" font-size="11" font-weight="bold" text-anchor="middle">Average Handle Time</text></svg>
<div class="abs" style="left:1530px;top:847px;width:96px;height:26px;border-radius:3.5px;background:#7cb9e8;border:1px solid #82b3da"></div>
<div class="t b" style="top:853.05px;font-size:14px;left:1535.5px;transform:scaleX(0.8737);transform-origin:left center;color:#f0f8ff">Set as Primary</div>
<div class="abs" style="left:1629px;top:847px;width:91px;height:26px;border-radius:3.5px;background:#7cb9e8;border:1px solid #82b3da"></div>
<div class="t b" style="top:853.05px;font-size:14px;left:1634.75px;transform:scaleX(0.8963);transform-origin:left center;color:#f0f8ff">Delete Result</div>
<div class="abs" style="left:1723px;top:847px;width:40px;height:26px;border-radius:3.5px;background:#f5a562;border:1px solid #e8a06c"></div>
<div class="t b" style="top:853.05px;font-size:14px;left:1729.1px;transform:scaleX(0.8502);transform-origin:left center;color:#fff6e8">Save</div>
<div class="abs" style="left:1766px;top:847px;width:121px;height:26px;border-radius:3.5px;background:#7cb9e8;border:1px solid #82b3da"></div>
<div class="t b" style="top:853.05px;font-size:14px;left:1771.5px;transform:scaleX(0.8891);transform-origin:left center;color:#f0f8ff">Save and Simulate</div>
<div class="abs" style="left:0;top:925px;width:1919px;height:6px;background:linear-gradient(to bottom,rgba(0,0,0,0),rgba(0,0,0,.05) 50%,rgba(0,0,0,.22))"></div>
<div id="foot"></div>
<div class="abs" style="left:4px;top:940px;width:1910px;height:18px;border:1px solid #c9c9c9;background:#fff"></div>
<div class="t" style="top:943.30px;font-size:11.7px;left:9px;transform:scaleX(1.0071);transform-origin:left center;color:#444">2022-08-11 08:46:47 Simulation Result for date :Aug/11/2022, Status :Completed</div>
<svg class="abs" style="left:1898px;top:945px" width="12" height="9" viewBox="0 0 12 9"><path d="M1.5 1.8 L6 6.3 L10.5 1.8" fill="none" stroke="#222" stroke-width="2"/></svg>
</body></html>
